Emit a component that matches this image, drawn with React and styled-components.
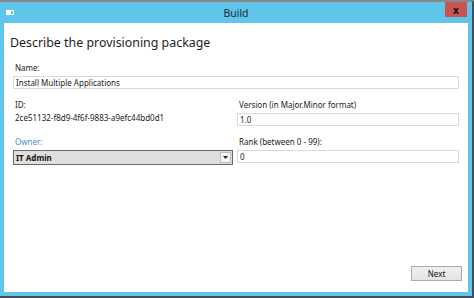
import React from "react";
import styled, { createGlobalStyle } from "styled-components";

const Global = createGlobalStyle`
  html, body { margin: 0; padding: 0; background: #ffffff; }
  body { font-family: "Noto Sans", "Liberation Sans", sans-serif; }
`;

const Frame = styled.div`
  width: 472px;
  height: 294px;
  border-top: 2px solid #8a8a8a;
  border-right: 2px solid #4d4d4d;
  border-bottom: 2px solid #4d4d4d;
  background: #5fc5ea;
  display: flex;
  flex-direction: column;
`;

const TitleBar = styled.div`
  position: relative;
  height: 21px;
  display: flex;
  align-items: center;
  justify-content: center;
  font-size: 10.5px;
  color: #1f2a33;
`;

const AppIcon = styled.svg`
  position: absolute;
  left: 6px;
  top: 8px;
`;

const CloseButton = styled.div`
  position: absolute;
  right: 5px;
  top: 0;
  width: 22px;
  height: 15px;
  background: #c75450;
  display: flex;
  align-items: center;
  justify-content: center;
  font-size: 10px;
  font-weight: bold;
  color: #111;
  line-height: 1;
`;

const Content = styled.div`
  flex: 1;
  margin: 0 4px 4px 4px;
  background: #ffffff;
  padding: 12px 9px 0 6px;
  display: flex;
  flex-direction: column;
`;

const Heading = styled.div`
  font-size: 12.4px;
  line-height: 16px;
  color: #1e1e1e;
  margin-bottom: 11px;
`;

const Label = styled.div`
  font-size: 8px;
  color: ${(p) => (p.$accent ? "#4f8fcc" : "#222")};
  margin-left: 5px;
  height: 12px;
  line-height: 12px;
`;

const Input = styled.div`
  height: 11px;
  border: 1px solid #dadada;
  margin: 2px 0 0 3px;
  padding-left: 2px;
  font-size: 8px;
  line-height: 11px;
  color: #222;
`;

const Value = styled.div`
  font-size: 8px;
  color: #222;
  margin: 1px 0 0 5px;
  line-height: 12px;
`;

const Grid = styled.div`
  display: grid;
  grid-template-columns: 223px 225px;
  column-gap: 1px;
  row-gap: 10px;
  margin-top: 10px;
`;

const Field = styled.div``;

const Select = styled.div`
  margin: 2px 0 0 3px;
  height: 13px;
  border: 1px solid #6a6a6a;
  background: #dedede;
  display: flex;
  align-items: center;
  justify-content: space-between;
  font-size: 8px;
  font-weight: bold;
  color: #111;
  padding-left: 2px;
`;

const Arrow = styled.div`
  width: 11px;
  height: 11px;
  margin-right: 1px;
  background: #f4f4f4;
  border: 1px solid #bdbdbd;
  box-sizing: border-box;
  display: flex;
  align-items: center;
  justify-content: center;
`;

const Footer = styled.div`
  margin-top: auto;
  margin-right: -3px;
  margin-bottom: 11px;
  display: flex;
  justify-content: flex-end;
`;

const Button = styled.div`
  width: 49px;
  height: 13px;
  border: 1px solid #acacac;
  background: linear-gradient(#f0f0f0, #e3e3e3);
  font-size: 8px;
  color: #111;
  display: flex;
  align-items: center;
  justify-content: center;
`;

export default function App() {
  return (
    <>
      <Global />
      <Frame>
        <TitleBar>
          <AppIcon width="8" height="5" viewBox="0 0 8 5">
            <rect x="0" y="0" width="4" height="5" fill="#fff" />
            <rect x="4.5" y="0.5" width="3" height="4" fill="none" stroke="#fff" strokeWidth="1" />
          </AppIcon>
          Build
          <CloseButton>x</CloseButton>
        </TitleBar>
        <Content>
          <Heading>Describe the provisioning package</Heading>
          <Label>Name:</Label>
          <Input>Install Multiple Applications</Input>
          <Grid>
            <Field>
              <Label>ID:</Label>
              <Value>2ce51132-f8d9-4f6f-9883-a9efc44bd0d1</Value>
            </Field>
            <Field>
              <Label>Version (in Major.Minor format)</Label>
              <Input>1.0</Input>
            </Field>
            <Field>
              <Label $accent>Owner:</Label>
              <Select>
                IT Admin
                <Arrow>
                  <svg width="5" height="3" viewBox="0 0 5 3">
                    <path d="M0 0 H5 L2.5 3 Z" fill="#222" />
                  </svg>
                </Arrow>
              </Select>
            </Field>
            <Field>
              <Label>Rank (between 0 - 99):</Label>
              <Input>0</Input>
            </Field>
          </Grid>
          <Footer>
            <Button>Next</Button>
          </Footer>
        </Content>
      </Frame>
    </>
  );
}
